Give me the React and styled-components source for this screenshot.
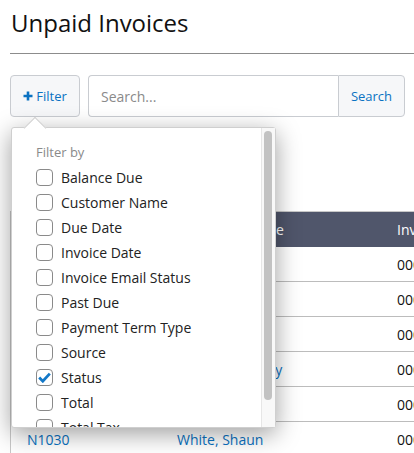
import React from "react";
import styled, { createGlobalStyle } from "styled-components";

const GlobalStyle = createGlobalStyle`
  html, body { margin: 0; padding: 0; background: #fff; }
  body { font-family: "Open Sans", "Noto Sans", sans-serif; color: #222; }
  * { box-sizing: border-box; }
`;

const Page = styled.div`
  width: 414px;
  height: 453px;
  overflow: hidden;
  padding-left: 10px;
  position: relative;
`;

const Title = styled.h1`
  margin: 0;
  padding-top: 7px;
  font-size: 24px;
  line-height: 32px;
  font-weight: 400;
  color: #111;
  padding-left: 1px;
`;

const Rule = styled.hr`
  margin: 14px 0 0 0;
  border: 0;
  border-top: 1px solid #8c8c8c;
  width: 420px;
`;

const Toolbar = styled.div`
  position: relative;
  display: flex;
  gap: 8px;
  margin-top: 21px;
  height: 42px;
`;

const FilterButton = styled.button`
  width: 70px;
  height: 42px;
  border: 1px solid #c9ccd1;
  border-radius: 4px;
  background: #f6f7f9;
  color: #0a72c2;
  font-family: inherit;
  font-size: 13px;
  display: flex;
  align-items: center;
  justify-content: center;
  gap: 3px;
  padding: 0 0 1px 0;
`;

const InputGroup = styled.div`
  display: flex;
  width: 317px;
  height: 42px;
`;

const SearchInput = styled.input`
  flex: 1;
  min-width: 0;
  border: 1px solid #c9ccd1;
  border-right: 0;
  border-radius: 4px 0 0 4px;
  padding: 0 12px;
  font-family: inherit;
  font-size: 14px;
  color: #222;
  outline: none;
  &::placeholder { color: #8a8a8a; }
`;

const SearchButton = styled.button`
  width: 67px;
  border: 1px solid #c9ccd1;
  border-radius: 0 4px 4px 0;
  background: #f6f7f9;
  color: #0a72c2;
  font-family: inherit;
  font-size: 13px;
  padding: 0 0 1px 0;
`;

const Dropdown = styled.div`
  position: absolute;
  left: 1px;
  top: 52px;
  width: 265px;
  height: 301px;
  display: flex;
  background: #fff;
  border: 1px solid #cfcfcf;
  border-radius: 3px;
  box-shadow: 0 6px 24px rgba(0, 0, 0, 0.38);
  z-index: 10;

  &::before {
    content: "";
    position: absolute;
    left: 15px;
    top: -8px;
    width: 15px;
    height: 15px;
    background: #fff;
    border-top: 1px solid #cfcfcf;
    border-left: 1px solid #cfcfcf;
    transform: rotate(45deg);
  }
`;

const List = styled.div`
  flex: 1;
  overflow: hidden;
  padding: 14px 0 0 24px;
`;

const ScrollTrack = styled.div`
  width: 14px;
  flex: none;
  background: #f8f8f8;
  border-left: 1px solid #e6e6e6;
  padding: 3px 2px 0 2px;
`;

const ScrollThumb = styled.div`
  width: 8px;
  height: 269px;
  border-radius: 4px;
  background: #c2c2c2;
`;

const FilterHeading = styled.div`
  font-size: 13px;
  line-height: 20px;
  color: #8a8a8a;
  margin-bottom: 3px;
`;

const Option = styled.label`
  display: flex;
  align-items: center;
  gap: 8px;
  height: 25px;
  font-size: 14px;
  color: #222;
  white-space: nowrap;
`;

const Box = styled.span`
  width: 17px;
  height: 17px;
  flex: none;
  border: 1px solid #8a8a8a;
  border-radius: 4px;
  background: #fff;
  display: flex;
  align-items: center;
  justify-content: center;
`;

const TableWrap = styled.div`
  margin-top: 94px;
  width: 620px;
  border-left: 1px solid #c8c8c8;
  border-top: 1px solid #c8c8c8;
`;

const Row = styled.div`
  display: grid;
  grid-template-columns: 150px 220px 1fr;
  height: 35px;
  align-items: center;
  background: ${(p) => (p.$head ? "#50566b" : "#fff")};
  color: ${(p) => (p.$head ? "#fff" : "#111")};
  border-bottom: ${(p) => (p.$head ? "0" : "1px solid #bcbcbc")};
  font-size: 14px;
`;

const Cell = styled.div`
  padding: 0 16px;
  white-space: nowrap;
  overflow: hidden;
  color: ${(p) => (p.$link ? "#0a72c2" : "inherit")};
`;

const PlusIcon = () => (
  <svg width="10" height="10" viewBox="0 0 10 10">
    <path d="M5 0.5v9M0.5 5h9" stroke="#0a72c2" strokeWidth="2.6" />
  </svg>
);

const CheckIcon = () => (
  <svg width="13" height="11" viewBox="0 0 13 11">
    <path d="M1.2 5.6l3.6 3.6L11.8 1.6" fill="none" stroke="#1278c8" strokeWidth="2.8" />
  </svg>
);

const options = [
  ["Balance Due", false],
  ["Customer Name", false],
  ["Due Date", false],
  ["Invoice Date", false],
  ["Invoice Email Status", false],
  ["Past Due", false],
  ["Payment Term Type", false],
  ["Source", false],
  ["Status", true],
  ["Total", false],
  ["Total Tax", false],
];

const rows = [
  ["N1025", "Miller, Robert", "0001025"],
  ["N1026", "Davis, Karen", "0001026"],
  ["N1027", "Wilson, James", "0001027"],
  ["N1028", "Anderson, Emily", "0001028"],
  ["N1029", "Clark, Lisa", "0001029"],
  ["N1030", "White, Shaun", "0001030"],
];

export default function App() {
  return (
    <>
      <GlobalStyle />
      <Page>
        <Title>Unpaid Invoices</Title>
        <Rule />
        <Toolbar>
          <FilterButton>
            <PlusIcon />
            Filter
          </FilterButton>
          <InputGroup>
            <SearchInput placeholder="Search..." />
            <SearchButton>Search</SearchButton>
          </InputGroup>
          <Dropdown>
            <List>
              <FilterHeading>Filter by</FilterHeading>
              {options.map(([label, checked]) => (
                <Option key={label}>
                  <Box>{checked && <CheckIcon />}</Box>
                  {label}
                </Option>
              ))}
            </List>
            <ScrollTrack>
              <ScrollThumb />
            </ScrollTrack>
          </Dropdown>
        </Toolbar>
        <TableWrap>
          <Row $head>
            <Cell>Invoice #</Cell>
            <Cell>Customer Name</Cell>
            <Cell>Invoice Number</Cell>
          </Row>
          {rows.map(([id, name, num]) => (
            <Row key={id}>
              <Cell $link>{id}</Cell>
              <Cell $link>{name}</Cell>
              <Cell>{num}</Cell>
            </Row>
          ))}
        </TableWrap>
      </Page>
    </>
  );
}
